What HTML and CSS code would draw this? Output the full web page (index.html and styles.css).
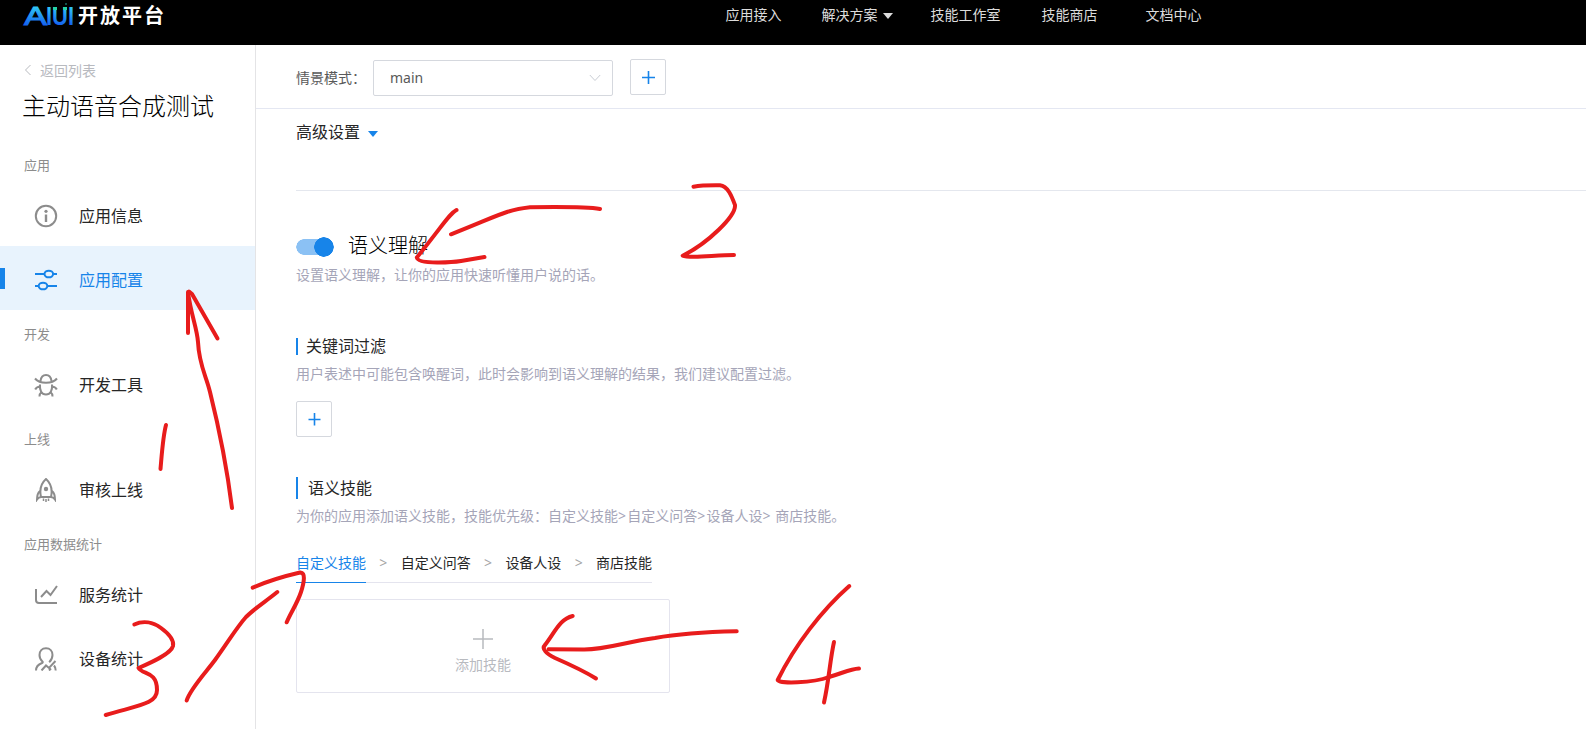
FILE: index.html
```html
<!DOCTYPE html>
<html lang="zh-CN">
  <head>
    <meta charset="UTF-8" />
    <meta name="viewport" content="width=device-width, initial-scale=1.0" />
    <title>AIUI 开放平台</title>
    <link rel="stylesheet" href="styles.css" />
  </head>
  <body>
    <header class="header">
      <div class="logo">
        <svg class="logo-mark" width="50" height="32" viewBox="0 0 50 32">
          <defs>
            <linearGradient id="logo-fill" x1="0" y1="0" x2="0" y2="1">
              <stop offset="0.2" stop-color="#2fc4f5" />
              <stop offset="0.8" stop-color="#1565f0" />
            </linearGradient>
          </defs>
          <text class="logo-a" x="0" y="25" textLength="23" lengthAdjust="spacingAndGlyphs" fill="url(#logo-fill)" stroke="url(#logo-fill)">A</text>
          <text class="logo-iui" x="22" y="25" textLength="28" lengthAdjust="spacingAndGlyphs" fill="url(#logo-fill)">IUI</text>
          <rect x="29" y="7" width="4" height="3" fill="#25d3a8" />
          <rect x="39" y="7" width="4" height="3" fill="#25d3a8" />
          <circle cx="42" cy="4" r="1" fill="#1c6f66" />
        </svg>
        <span class="logo-text">开放平台</span>
      </div>
      <nav class="nav">
        <a>应用接入</a>
        <a>解决方案<i class="caret"></i></a>
        <a>技能工作室</a>
        <a>技能商店</a>
        <a>文档中心</a>
      </nav>
    </header>

    <div class="page">
      <aside class="sidebar">
        <a class="back">
          <svg width="8" height="12" viewBox="0 0 8 12"><path d="M6.5 1 1.5 6l5 5" /></svg>
          返回列表
        </a>
        <h1>主动语音合成测试</h1>

        <h4>应用</h4>
        <a class="menu-item">
          <svg viewBox="0 0 24 24">
            <circle cx="12" cy="12" r="10.2" />
            <path d="M12 10.5V18" stroke-width="2.4" />
            <circle class="dot" cx="12" cy="7.3" r="1.6" />
          </svg>
          <span>应用信息</span>
        </a>
        <a class="menu-item active">
          <svg viewBox="0 0 24 24">
            <path d="M1 6h9.500M19 6h4M1 18h4M13.500 18H23" />
            <ellipse cx="14.800" cy="6" rx="4.300" ry="3.300" />
            <ellipse cx="9" cy="18" rx="4.300" ry="3.300" />
          </svg>
          <span>应用配置</span>
        </a>

        <h4>开发</h4>
        <a class="menu-item">
          <svg viewBox="0 0 24 24">
            <path d="M6.500 8C7 4 9 2 12 2s5 2 5.500 6M1 5.500C3.500 8.500 7 9.800 12 9.800s8.500-1.300 11-4.300" />
            <path d="M6 11.500c-.5 6 1.500 10 6 10s6.500-4 6-10M1.200 16.500c.8-1.800 2.300-2.700 4.600-3M22.800 16.500c-.8-1.800-2.300-2.700-4.600-3M5.500 23.500c0-2 .5-3.300 2-4.500M18.500 23.500c0-2-.5-3.300-2-4.500" />
          </svg>
          <span>开发工具</span>
        </a>

        <h4>上线</h4>
        <a class="menu-item">
          <svg viewBox="0 0 24 24">
            <path d="M7 19c-1.800-8 .5-14 5-18 4.500 4 6.800 10 5 18M6 13c-2.500 2-3 4.500-3 8.500 1-1.500 2.300-2.500 4.300-2.500h9.400c2 0 3.300 1 4.300 2.500 0-4-.5-6.500-3-8.500" />
            <path d="M9.500 20.500V23M12 21v3.500M14.500 20.500V23" stroke-width="1.500" />
            <circle class="dot" cx="12" cy="11" r="2.200" />
          </svg>
          <span>审核上线</span>
        </a>

        <h4>应用数据统计</h4>
        <a class="menu-item">
          <svg viewBox="0 0 24 24">
            <path d="M2 6v11c0 2 1 3 3 3h18M7 14l5.500-6 4 4L23 3" />
          </svg>
          <span>服务统计</span>
        </a>
        <a class="menu-item">
          <svg viewBox="0 0 24 24">
            <path d="M2 23.500c0-4 2-6 6-7.500 1-.5 1-1 .2-1.800C6.300 12.500 5.500 10.500 5.500 8c0-4 2.500-6.700 6.500-6.700s6.500 2.700 6.500 6.700c0 2.800-1 5-3.300 7.300M7.500 23.500l4.500-5 3 2.500 6.500-7M15 23.500l2-2M20 18.500c1.300 1.500 1.700 3 1.700 5" />
          </svg>
          <span>设备统计</span>
        </a>
      </aside>

      <main class="main">
        <div class="scene">
          <label>情景模式：</label>
          <div class="select">
            main
            <svg width="12" height="8" viewBox="0 0 12 8"><path d="M.8 1 6 6.500 11.200 1" /></svg>
          </div>
          <button class="add"><svg width="14" height="14" viewBox="0 0 14 14"><path d="M7.500 1v13M1 7.500h13" /></svg></button>
        </div>

        <div class="content">
          <div class="advanced">高级设置<i class="caret"></i></div>

          <section class="semantic">
            <h2><span class="switch"></span>语义理解</h2>
            <p>设置语义理解，让你的应用快速听懂用户说的话。</p>
          </section>

          <section class="keyword">
            <h3>关键词过滤</h3>
            <p>用户表述中可能包含唤醒词，此时会影响到语义理解的结果，我们建议配置过滤。</p>
            <button class="add"><svg width="13" height="13" viewBox="0 0 13 13"><path d="M6.500 0v12.500M.5 6.500h12" /></svg></button>
          </section>

          <section class="skill">
            <h3>语义技能</h3>
            <p>为你的应用添加语义技能，技能优先级：自定义技能<i>&gt;</i>自定义问答<i>&gt;</i>设备人设<i>&gt;</i> 商店技能。</p>
            <div class="tabs">
              <span class="tab current">自定义技能</span>
              <i>&gt;</i>
              <span class="tab">自定义问答</span>
              <i>&gt;</i>
              <span class="tab">设备人设</span>
              <i>&gt;</i>
              <span class="tab">商店技能</span>
            </div>
            <div class="add-skill">
              <svg width="20" height="20" viewBox="0 0 20 20"><path d="M10 0v20M0 10h20" /></svg>
              添加技能
            </div>
          </section>
        </div>
      </main>
    </div>

    <!-- hand-drawn step marks -->
    <svg class="marks" width="1586" height="729" viewBox="0 0 1586 729">
      <!-- step 1 -->
      <path d="M166 425C163 436 162 452 160.500 469" />
      <path d="M188 333V292C191 315 197 328 198 342 199 365 206 375 210 392 219 428 227 468 232 508" />
      <path d="M189 291.500 192 294 217.500 338.500" />
      <!-- step 2 -->
      <path d="M693.500 186.700C703 185 713 185.300 720 185.300 728 186 732 197 735 205 736 216 708 243 682.700 255.700 690 259 715 255 734 255" />
      <path d="M600 209C585 206.500 550 207 530 207.300 505 210 500 215 451 234.300" />
      <path d="M456.500 210C449 214 444 224 416.800 257.500 418 265 455 262 461 261L484.500 257" />
      <!-- step 3 -->
      <path d="M134.300 624.500C143 620.500 153 622 161 628 172 636 174 641 173 646 171 654 150 663 138.500 668 143 675 157 671 157 690 157 704 139 705 105.700 715" />
      <path d="M186.700 700.500C190 689 207 671 215 660 228 642 237 627 246 617 255 608 265 602 277.300 592" />
      <path d="M252.700 587.700C270 580 285 576 300 572.500 306 572 304 583 301 592 297 604 291 612 286.700 622.300" />
      <!-- step 4 -->
      <path d="M736.700 631.300C706 632 683 633 655 638 625 642 605 650 583 649.500L548.500 649.300" />
      <path d="M572.700 616C560 619 555 632 545 645 541 649 547 654 555 658 571 665 584 671 596 678.500" />
      <path d="M849.300 586C822 610 795 645 777.700 680 778 684 813 683 829 677 843 673 850 669 859 668.500" />
      <path d="M834 642C830 660 829 680 824 702.500" />
    </svg>
  </body>
</html>
```

FILE: styles.css
```css
* {
  box-sizing: border-box;
}

body {
  margin: 0;
  height: 729px;
  overflow: hidden;
  font-family: "Noto Sans", "Noto Sans CJK SC", sans-serif;
  font-size: 14px;
  font-weight: 400;
  color: #262626;
  background: #fff;
}

h1,
h2,
h3,
h4,
p {
  margin: 0;
  font-weight: 400;
}

i {
  font-style: normal;
}

svg {
  fill: none;
  flex: none;
}

/* Header */
.header {
  display: flex;
  height: 45px;
  padding-left: 24px;
  background: #000;
}

.logo {
  display: flex;
  width: 701.5px;
}

.logo-mark {
  overflow: visible;
}

.logo-mark text {
  font-family: "Liberation Sans", sans-serif;
  font-size: 25px;
}

.logo-a {
  stroke-width: 1;
}

.logo-iui {
  font-weight: 700;
}

.logo-text {
  margin-left: 4px;
  font-size: 20px;
  font-weight: 700;
  line-height: 32px;
  letter-spacing: 2px;
  color: #fff;
}

.nav {
  display: flex;
  line-height: 30px;
  color: #dcdcdc;
}

.nav a {
  margin-right: 40px;
}

.nav a:nth-child(2) {
  margin-right: 38px;
}

.nav a:nth-child(3) {
  margin-right: 41px;
}

.nav a:nth-child(4) {
  margin-right: 48px;
}

.caret {
  display: inline-block;
  margin-left: 5px;
  border: 5px solid transparent;
  border-top: 6px solid currentColor;
  border-bottom: 0;
  vertical-align: 1px;
}

.page {
  display: flex;
  height: 684px;
}

/* Sidebar */
.sidebar {
  width: 256px;
  border-right: 1px solid #e4e4e6;
}

.back {
  display: flex;
  align-items: center;
  gap: 8px;
  height: 20px;
  margin: 15px 0 0 24px;
  color: #b8babf;
}

.back svg {
  stroke: #b8babf;
}

.sidebar h1 {
  height: 36px;
  margin: 8px 0 0 22px;
  font-size: 24px;
  font-weight: 300;
  line-height: 36px;
  color: #000;
}

.sidebar h4 {
  height: 41px;
  padding: 4px 0 0 24px;
  font-size: 13px;
  line-height: 41px;
  color: #8c8c8c;
}

.sidebar h1 + h4 {
  height: 58px;
  padding-top: 21px;
}

.menu-item {
  display: flex;
  align-items: center;
  height: 64px;
  padding: 4px 0 0 34px;
  font-size: 16px;
}

.menu-item span {
  padding-bottom: 2px;
}

.menu-item svg {
  width: 24px;
  height: 24px;
  margin-right: 21px;
  stroke: #8c8c8c;
  stroke-width: 2;
}

.menu-item .dot {
  fill: #8c8c8c;
  stroke: none;
}

.menu-item.active {
  color: #1784e9;
  background: linear-gradient(#1784e9, #1784e9) 0 22px / 5px 21px no-repeat #e8f3fd;
}

.menu-item.active svg {
  stroke: #1784e9;
}

/* Main */
.main {
  flex: 1;
}

.scene {
  display: flex;
  height: 64px;
  padding: 14px 0 0 40px;
  border-bottom: 1px solid #e4e7f2;
  color: #595959;
}

.scene label {
  width: 77px;
  line-height: 38px;
  white-space: nowrap;
}

.select {
  display: flex;
  align-items: center;
  justify-content: space-between;
  width: 240px;
  height: 36px;
  margin: 1px 17px 0 0;
  padding: 0 11px 1px 16px;
  border: 1px solid #d5d8de;
  border-radius: 2px;
}

.select svg {
  stroke: #c8ccd3;
}

.add {
  display: flex;
  align-items: center;
  justify-content: center;
  width: 36px;
  height: 36px;
  padding: 0;
  border: 1px solid #d5d8de;
  border-radius: 2px;
  background: #fff;
}

.add svg {
  stroke: #1784e9;
  stroke-width: 1.6;
}

.content {
  padding-left: 40px;
}

.advanced {
  height: 82px;
  border-bottom: 1px solid #e4e7ee;
  font-size: 16px;
  line-height: 47px;
}

.advanced .caret {
  margin-left: 8px;
  color: #1784e9;
}

.content p {
  line-height: 20px;
  color: #a5a5b8;
}

.semantic {
  height: 147px;
  padding-top: 40px;
}

.semantic h2 {
  display: flex;
  align-items: center;
  height: 30px;
  font-size: 20px;
  font-weight: 300;
  line-height: 30px;
  color: #000;
}

.semantic p {
  margin-top: 4px;
}

.switch {
  width: 38px;
  height: 20px;
  margin: 2px 14px 0 0;
  border-radius: 10px;
  background:
    radial-gradient(circle at 28px 10px, #1784e9 9.5px, transparent 10px),
    radial-gradient(circle at 8px 10px, #8bc1f4 7.5px, transparent 8px),
    linear-gradient(#8bc1f4, #8bc1f4) 8px 2px / 20px 16px no-repeat;
}

.content h3 {
  padding-left: 8px;
  border-left: 2px solid #1784e9;
  font-size: 16px;
  line-height: 17px;
}

.keyword {
  height: 139px;
}

.keyword p {
  margin-top: 9px;
}

.keyword .add {
  margin-top: 17px;
}

.skill h3 {
  padding-left: 10px;
  line-height: 22px;
}

.skill p {
  margin-top: 7px;
}

.skill p i {
  letter-spacing: 1.2px;
}

.tabs {
  display: inline-flex;
  margin-top: 27px;
  height: 30px;
  border-bottom: 1px solid #e4e4ee;
  line-height: 20px;
}

.tabs i {
  width: 34.7px;
  text-align: center;
  color: #a6a6a6;
}

.tab.current {
  height: 30px;
  border-bottom: 1px solid #1784e9;
  color: #1784e9;
}

.add-skill {
  display: flex;
  flex-direction: column;
  align-items: center;
  gap: 6px;
  width: 374px;
  height: 94px;
  margin-top: 16px;
  padding-top: 29px;
  border: 1px solid #e4e4ee;
  border-radius: 2px;
  line-height: 20px;
  color: #b8babf;
}

.add-skill svg {
  stroke: #b8babf;
  stroke-width: 1.5;
}

.marks {
  position: absolute;
  top: 0;
  left: 0;
  stroke: #e81c1c;
  stroke-width: 4;
  stroke-linecap: round;
  stroke-linejoin: round;
  pointer-events: none;
}
```
